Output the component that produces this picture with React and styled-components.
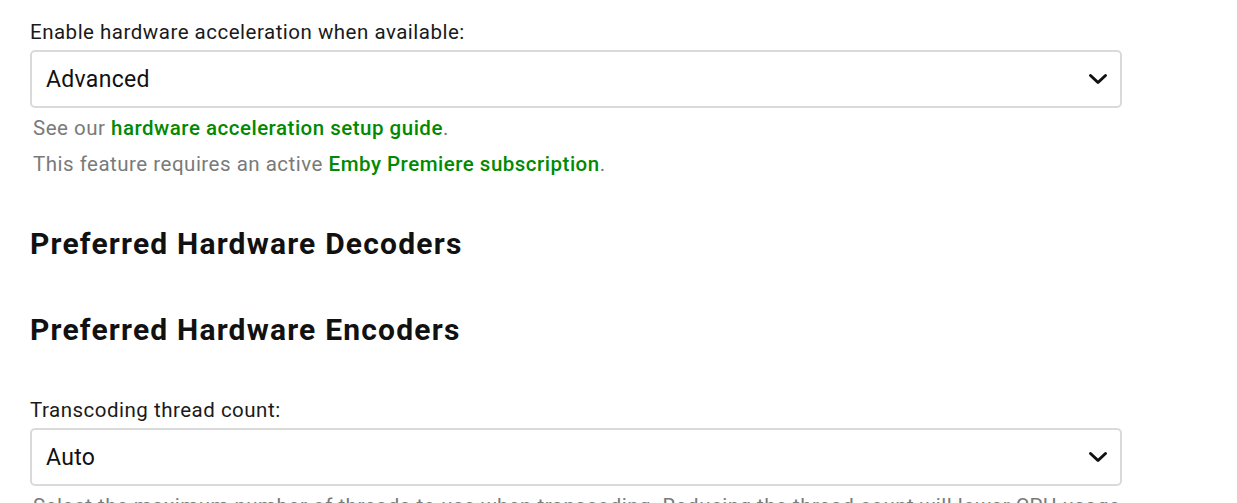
import React from "react";
import styled, { createGlobalStyle } from "styled-components";

const Global = createGlobalStyle`
  html, body { margin: 0; padding: 0; background: #fff; }
  body { font-family: Roboto, "Noto Sans", sans-serif; color: #111; }
`;

const Page = styled.div`
  padding: 14px 115px 0 30px;
  display: flex;
  flex-direction: column;
`;

const Field = styled.div`
  display: flex;
  flex-direction: column;
  margin-top: ${(p) => p.$mt || 0}px;
`;

const Label = styled.label`
  font-size: 20.5px;
  letter-spacing: 0.5px;
  line-height: 36px;
  color: #1a1a1a;
`;

const SelectBox = styled.div`
  height: 54px;
  border: 2px solid #dadada;
  border-radius: 5px;
  display: flex;
  align-items: center;
  justify-content: space-between;
  padding: 0 10px 0 14px;
  font-size: 23px;
  letter-spacing: 0.3px;
  color: #111;
`;

const Help = styled.div`
  font-size: 20.5px;
  letter-spacing: 0.5px;
  line-height: 36px;
  color: #7a7a7a;
  padding-left: 3px;
  margin-top: ${(p) => p.$mt || 0}px;
`;

const Link = styled.a`
  color: #018a01;
  font-weight: 500;
  text-decoration: none;
`;

const Heading = styled.h2`
  margin: 0;
  font-size: 30px;
  letter-spacing: 1.2px;
  font-weight: 700;
  line-height: 40px;
  color: #111;
  margin-top: ${(p) => p.$mt}px;
`;

const Chevron = () => (
  <svg width="24" height="24" viewBox="0 0 24 24" fill="none" stroke="#111" strokeWidth="3" strokeLinecap="round" strokeLinejoin="round">
    <polyline points="4.5,8.5 12,15.5 19.5,8.5" />
  </svg>
);

export default function App() {
  return (
    <>
      <Global />
      <Page>
        <Field>
          <Label>Enable hardware acceleration when available:</Label>
          <SelectBox>
            <span>Advanced</span>
            <Chevron />
          </SelectBox>
          <Help $mt={2}>
            See our <Link href="#">hardware acceleration setup guide</Link>.
          </Help>
          <Help>
            This feature requires an active <Link href="#">Emby Premiere subscription</Link>.
          </Help>
        </Field>
        <Heading $mt={42}>Preferred Hardware Decoders</Heading>
        <Heading $mt={46}>Preferred Hardware Encoders</Heading>
        <Field $mt={42}>
          <Label>Transcoding thread count:</Label>
          <SelectBox>
            <span>Auto</span>
            <Chevron />
          </SelectBox>
          <Help $mt={2}>
            Select the maximum number of threads to use when transcoding. Reducing the thread count will lower CPU usage but may not convert fast enough for a smooth playback experience.
          </Help>
        </Field>
      </Page>
    </>
  );
}
